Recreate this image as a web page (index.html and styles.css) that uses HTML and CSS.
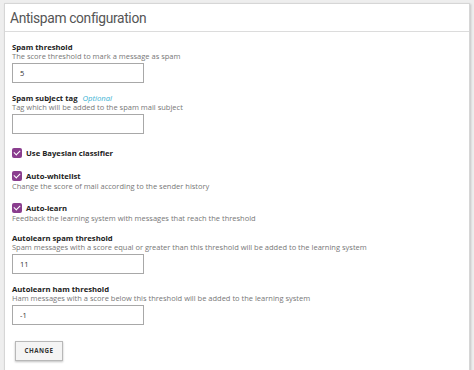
FILE: index.html
```html
<!DOCTYPE html>
<html>
	<head>
		<meta charset="utf-8">
		<title>Antispam configuration</title>
		<link rel="stylesheet" href="styles.css">
	</head>
	<body>
		<div class="panel">
			<div class="panelHead">
				<h2>Antispam configuration</h2>
			</div>
			<form class="form">
				<div class="field">
					<label class="lbl">Spam threshold</label>
					<div class="desc">The score threshold to mark a message as spam</div>
					<input class="txt" type="text" value="5">
				</div>
				<div class="field">
					<label class="lbl">Spam subject tag <em class="opt">Optional</em></label>
					<div class="desc">Tag which will be added to the spam mail subject</div>
					<input class="txt" type="text" value="">
				</div>
				<div class="check first">
					<div class="row"><span class="box"></span><span class="lbl">Use Bayesian classifier</span></div>
				</div>
				<div class="check">
					<div class="row"><span class="box"></span><span class="lbl">Auto-whitelist</span></div>
					<div class="desc">Change the score of mail according to the sender history</div>
				</div>
				<div class="check">
					<div class="row"><span class="box"></span><span class="lbl">Auto-learn</span></div>
					<div class="desc">Feedback the learning system with messages that reach the threshold</div>
				</div>
				<div class="field">
					<label class="lbl">Autolearn spam threshold</label>
					<div class="desc">Spam messages with a score equal or greater than this threshold will be added to the learning system</div>
					<input class="txt" type="text" value="11">
				</div>
				<div class="field">
					<label class="lbl">Autolearn ham threshold</label>
					<div class="desc">Ham messages with a score below this threshold will be added to the learning system</div>
					<input class="txt" type="text" value="-1">
				</div>
				<div class="actions">
					<button class="btn" type="button">Change</button>
				</div>
			</form>
		</div>
	</body>
</html>
```

FILE: styles.css
```css
* {
	margin: 0;
	padding: 0;
	box-sizing: border-box;
}

html,
body {
	width: 100%;
	height: 100%;
}

body {
	background: #eeeeee;
	font-family: "Open Sans", "Noto Sans", sans-serif;
	padding: 3px 4px 0 4px;
}

/* 面板 */
.panel {
	width: 466px;
	background: #fff;
	border: 1px solid #d6d6d6;
	box-shadow: 1px 1px 2px rgba(0,0,0,0.18);
}

.panelHead {
	height: 28px;
	border-bottom: 1px solid #dcdcdc;
	padding-left: 5px;
	display: flex;
	align-items: center;
}

.panelHead h2 {
	font-family: Roboto, "Open Sans", sans-serif;
	font-size: 13.8px;
	font-weight: normal;
	letter-spacing: -0.35px;
	color: #555;
}

.form {
	padding: 11px 7px 9px 7px;
	display: flex;
	flex-direction: column;
	gap: 11px;
}

.lbl {
	display: block;
	font-size: 7.7px;
	line-height: 9px;
	font-weight: bold;
	color: #222;
}

.opt {
	font-weight: normal;
	color: #3cb4d4;
	margin-left: 3px;
}

.desc {
	font-size: 7.5px;
	line-height: 9px;
	color: #777;
}

.txt {
	display: block;
	width: 132px;
	height: 20px;
	margin-top: 2px;
	border: 1px solid #a8a8a8;
	padding-left: 7px;
	font-family: inherit;
	font-size: 7.5px;
	color: #333;
	outline: none;
}

/* 复选框 */
.check.first {
	margin-top: 2px;
}

.row {
	display: flex;
	align-items: center;
	height: 12px;
}

.box {
	width: 10px;
	height: 10px;
	border-radius: 2px;
	background: #8a3d8e;
	margin-right: 4px;
	position: relative;
}

.box::after {
	content: '';
	position: absolute;
	left: 3px;
	top: 1px;
	width: 3px;
	height: 5px;
	border: solid #fff;
	border-width: 0 1.7px 1.7px 0;
	transform: rotate(45deg);
}

.actions {
	padding-left: 3px;
}

.btn {
	width: 48px;
	height: 20px;
	background: #f4f4f4;
	border: 1px solid #b8b8b8;
	box-shadow: 0 1px 2px rgba(0,0,0,0.25);
	font-family: inherit;
	font-size: 6.2px;
	font-weight: bold;
	letter-spacing: 0.5px;
	text-transform: uppercase;
	color: #333;
}
```
